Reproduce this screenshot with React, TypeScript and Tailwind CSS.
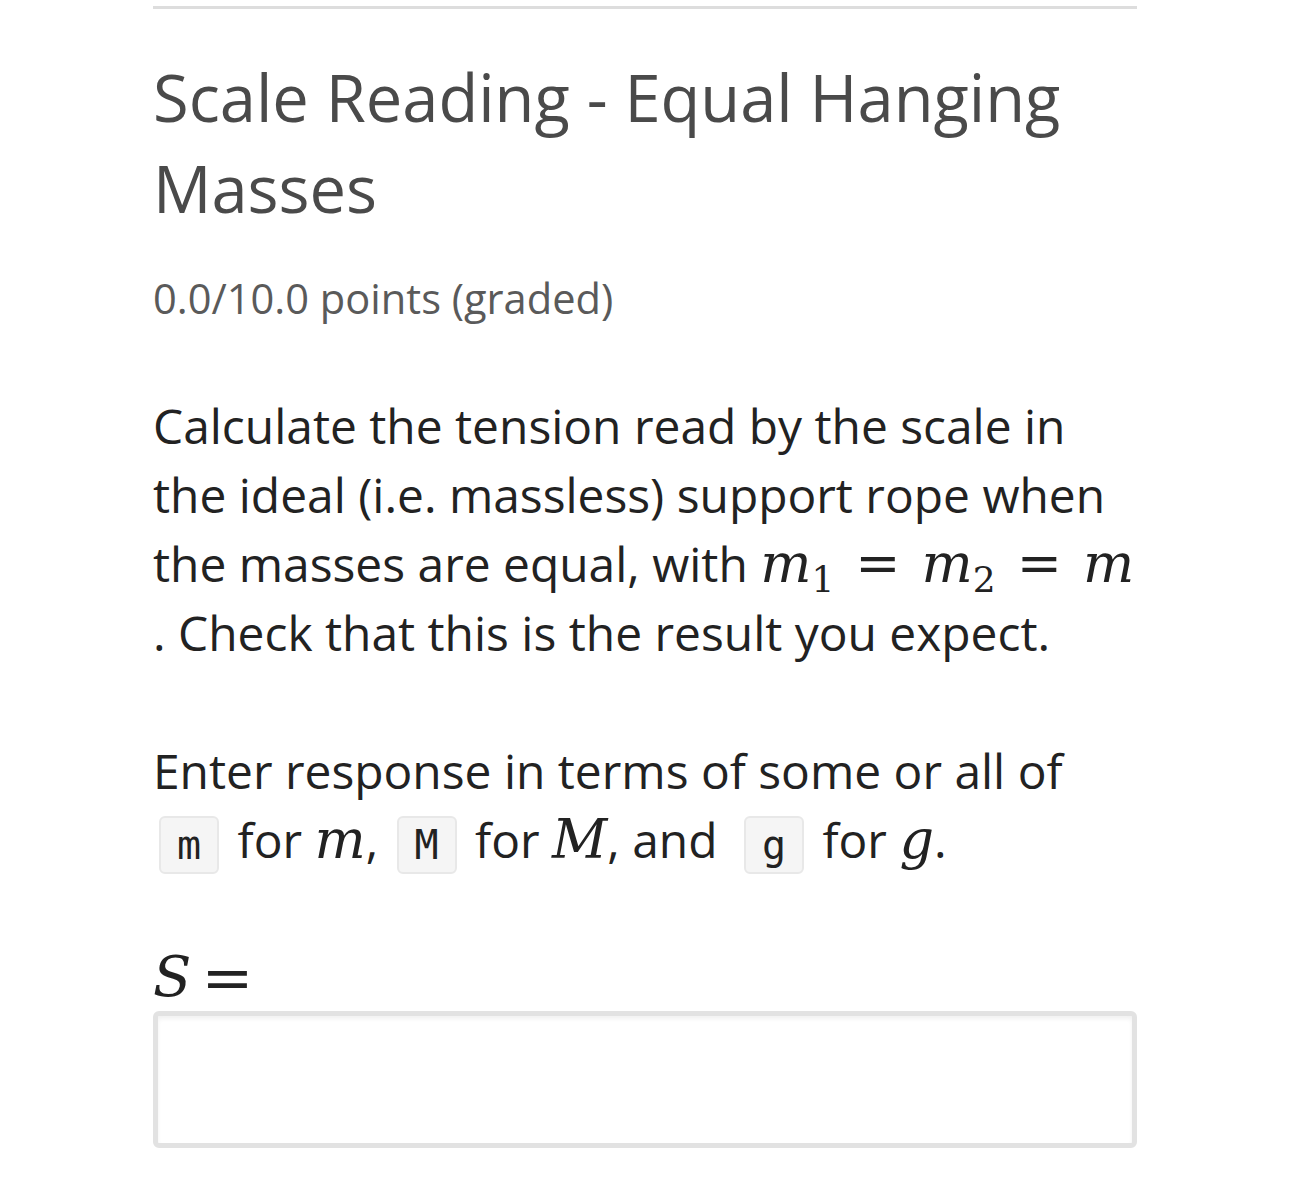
import React from "react";

const sans = { fontFamily: '"Open Sans", "Noto Sans", sans-serif' } as const;
const serif = { fontFamily: '"DejaVu Serif", "Liberation Serif", serif' } as const;

function MI({ children }: { children: React.ReactNode }) {
  return (
    <span className="italic text-[54px] leading-[0px]" style={serif}>
      {children}
    </span>
  );
}

function Sub({ children }: { children: React.ReactNode }) {
  return (
    <span className="relative top-[10px] text-[36px] leading-[0px] not-italic" style={serif}>
      {children}
    </span>
  );
}

function Eq() {
  return (
    <span className="mx-[21px] text-[54px] leading-[0px]" style={serif}>
      =
    </span>
  );
}

function Chip({ children }: { children: React.ReactNode }) {
  return (
    <span
      className="inline-block align-middle mx-[6px] h-[58px] px-[16px] rounded-md border-2 border-[#e8e8e8] bg-[#f5f5f5] text-[40px] leading-[54px] text-[#222]"
      style={{ fontFamily: '"DejaVu Sans Mono", monospace' }}
    >
      {children}
    </span>
  );
}

export default function App() {
  return (
    <div className="w-full bg-white" style={sans}>
      <div className="mx-auto w-[984px] pt-[6px] pb-[39px]">
        <div className="h-[3px] bg-[#dddddd]" />
        <h2 className="mt-[43px] text-[65px] leading-[91px] text-[#4a4a4a] font-normal">
          Scale Reading - Equal Hanging Masses
        </h2>
        <div className="mt-[34px] text-[41.6px] leading-[61px] text-[#5a5a5a]">0.0/10.0 points (graded)</div>
        <p className="mt-[62px] text-[47.9px] leading-[69px] text-[#222]">
          Calculate the tension read by the scale in the ideal (i.e. massless) support rope when the masses are equal, with{" "}
          <span className="whitespace-nowrap">
            <MI>m</MI>
            <Sub>1</Sub>
            <Eq />
            <MI>m</MI>
            <Sub>2</Sub>
            <Eq />
            <MI>m</MI>
          </span>
          <br />. Check that this is the result you expect.
        </p>
        <p className="mt-[69px] text-[47.9px] leading-[69px] text-[#222]">
          Enter response in terms of some or all of <br />
          <Chip>m</Chip> for <MI>m</MI>, <Chip>M</Chip> for <MI>M</MI>,{" "}and{" "}
          <span className="ml-[8px]"><Chip>g</Chip></span> for <MI>g</MI>.
        </p>
        <div className="mt-[73px] flex items-center h-[60px]">
          <span className="italic text-[56px] text-[#222]" style={serif}>S</span>
          <span className="ml-[10px] text-[62px] text-[#222]" style={serif}>=</span>
        </div>
        <div className="mt-[4px] h-[137px] rounded-[6px] border-[5px] border-[#e2e2e2] bg-white shadow-[inset_0_3px_4px_rgba(0,0,0,0.06)]" />
      </div>
    </div>
  );
}
